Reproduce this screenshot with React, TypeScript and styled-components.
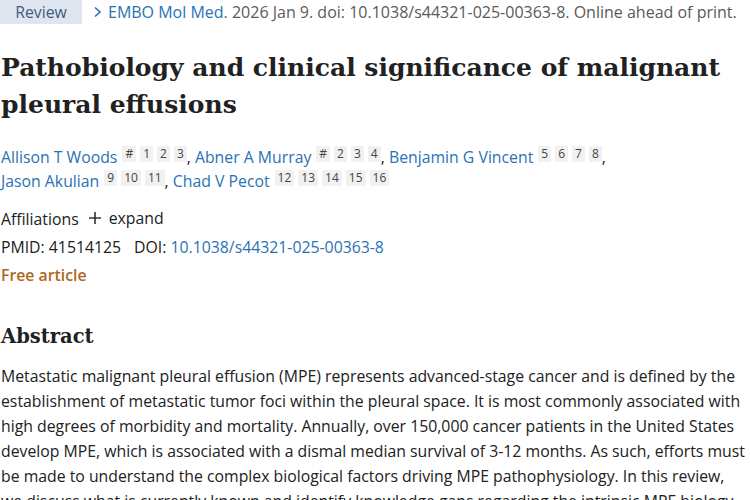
import React from "react";
import styled, { createGlobalStyle } from "styled-components";

const Global = createGlobalStyle`
  html, body { margin: 0; padding: 0; background: #fff; }
  body { font-family: "Open Sans", "Noto Sans", sans-serif; color: #212121; }
`;

const Page = styled.main`
  padding: 0 0 0 1px;
  width: 749px;
  overflow: hidden;
`;

const TopRow = styled.div`
  display: flex;
  align-items: center;
  height: 24px;
  font-size: 16px;
  white-space: nowrap;
`;

const Badge = styled.span`
  display: inline-flex;
  align-items: center;
  justify-content: center;
  width: 82px;
  height: 24px;
  margin-left: -1px;
  background: #dfe6ef;
  color: #3c5d80;
  font-size: 15.8px;
`;

const Cite = styled.span`
  display: inline-flex;
  align-items: center;
  margin-left: 11px;
  color: #5a5a5a;
  gap: 6px;
`;

const Link = styled.a`
  color: #2a72b5;
  text-decoration: none;
`;

const Title = styled.h1`
  margin: 25px 0 0;
  font-family: "DejaVu Serif", serif;
  font-weight: 700;
  font-size: 25px;
  line-height: 37px;
  color: #212121;
`;

const Authors = styled.div`
  margin-top: 22px;
  font-size: 15.8px;
  line-height: 24px;
`;

const Author = styled.span`
  white-space: nowrap;
`;

const Sups = styled.span`
  display: inline-flex;
  gap: 4px;
  margin-left: 5px;
  vertical-align: 5px;
`;

const Sup = styled.span`
  display: inline-block;
  background: #f1f1f1;
  color: #444;
  font-size: 12px;
  line-height: 16px;
  padding: 0 3px;
`;

const Meta = styled.div`
  margin-top: 11px;
  display: flex;
  flex-direction: column;
  font-size: 15.8px;
  line-height: 28px;
  color: #212121;
`;

const Expand = styled.span`
  margin-left: 9px;
  display: inline-flex;
  align-items: center;
  gap: 7px;
`;

const Ids = styled.div`
  display: flex;
  gap: 13px;
`;

const Free = styled.div`
  color: #b0661f;
  font-weight: 600;
`;

const AbstractTitle = styled.h2`
  margin: 33px 0 0;
  font-family: "DejaVu Serif", serif;
  font-weight: 700;
  font-size: 19.5px;
  line-height: 30px;
  color: #212121;
`;

const Body = styled.p`
  margin: 12px 4px 0 0;
  font-size: 15.8px;
  line-height: 25px;
  color: #212121;
`;

const Chevron = () => (
  <svg width="9" height="12" viewBox="0 0 9 12" fill="none">
    <path d="M2 1.5 L7 6 L2 10.5" stroke="#2a72b5" strokeWidth="1.6" />
  </svg>
);

const Plus = () => (
  <svg width="14" height="14" viewBox="0 0 14 14">
    <path d="M7 1 V13 M1 7 H13" stroke="#333" strokeWidth="1.6" />
  </svg>
);

const authors: { name: string; sups: string[]; comma: boolean }[] = [
  { name: "Allison T Woods", sups: ["#", "1", "2", "3"], comma: true },
  { name: "Abner A Murray", sups: ["#", "2", "3", "4"], comma: true },
  { name: "Benjamin G Vincent", sups: ["5", "6", "7", "8"], comma: true },
  { name: "Jason Akulian", sups: ["9", "10", "11"], comma: true },
  { name: "Chad V Pecot", sups: ["12", "13", "14", "15", "16"], comma: false },
];

export default function App() {
  return (
    <Page>
      <Global />
      <TopRow>
        <Badge>Review</Badge>
        <Cite>
          <Chevron />
          <span>
            <Link href="#">EMBO Mol Med.</Link> 2026 Jan 9. doi: 10.1038/s44321-025-00363-8. Online ahead of print.
          </span>
        </Cite>
      </TopRow>
      <Title>
        Pathobiology and clinical significance of malignant pleural effusions
      </Title>
      <Authors>
        {authors.map((a, i) => (
          <React.Fragment key={a.name}>
            <Author>
              <Link href="#">{a.name}</Link>
              <Sups>
                {a.sups.map((s) => (
                  <Sup key={s}>{s}</Sup>
                ))}
              </Sups>
              {a.comma ? "," : ""}
            </Author>
            {i < authors.length - 1 ? " " : ""}
          </React.Fragment>
        ))}
      </Authors>
      <Meta>
        <div>
          Affiliations
          <Expand>
            <Plus />
            expand
          </Expand>
        </div>
        <Ids>
          <span>PMID: 41514125</span>
          <span>
            DOI: <Link href="#">10.1038/s44321-025-00363-8</Link>
          </span>
        </Ids>
        <Free>Free article</Free>
      </Meta>
      <AbstractTitle>Abstract</AbstractTitle>
      <Body>
        Metastatic malignant pleural effusion (MPE) represents advanced-stage cancer and is defined by the
        establishment of metastatic tumor foci within the pleural space. It is most commonly associated with
        high degrees of morbidity and mortality. Annually, over 150,000 cancer patients in the United States
        develop MPE, which is associated with a dismal median survival of 3-12 months. As such, efforts must
        be made to understand the complex biological factors driving MPE pathophysiology. In this review,
        we discuss what is currently known and identify knowledge gaps regarding the intrinsic MPE biology
      </Body>
    </Page>
  );
}
